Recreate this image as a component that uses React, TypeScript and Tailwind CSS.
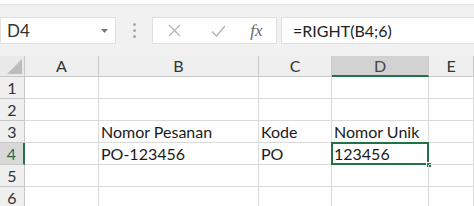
import React from "react";

const cols = ["A", "B", "C", "D", "E"];
const rows: { n: number; cells: string[] }[] = [
  { n: 1, cells: ["", "", "", "", ""] },
  { n: 2, cells: ["", "", "", "", ""] },
  { n: 3, cells: ["", "Nomor Pesanan", "Kode", "Nomor Unik", ""] },
  { n: 4, cells: ["", "PO-123456", "PO", "123456", ""] },
  { n: 5, cells: ["", "", "", "", ""] },
  { n: 6, cells: ["", "", "", "", ""] },
];

export default function App() {
  return (
    <div
      className="w-[474px] h-[206px] overflow-hidden bg-white text-[#222]"
      style={{ fontFamily: "Lato, 'Open Sans', sans-serif" }}
    >
      <div className="h-[5px] bg-white border-b border-[#e4e4e4]" />
      <div className="h-[51px] bg-[#f1f1f1] flex items-center">
        <div className="w-[116px] h-[27px] bg-white border border-[#e0e0e0] flex items-center justify-between pl-[6px] pr-[7px]">
          <span className="text-[17px] leading-none text-[#333]">D4</span>
          <svg width="7" height="4" viewBox="0 0 7 4">
            <path d="M0 0 L7 0 L3.5 4 Z" fill="#777" />
          </svg>
        </div>
        <div className="w-[36px] flex flex-col items-center gap-[3px]">
          <div className="w-[3px] h-[3px] rounded-full bg-[#a8a8a8]" />
          <div className="w-[3px] h-[3px] rounded-full bg-[#a8a8a8]" />
          <div className="w-[3px] h-[3px] rounded-full bg-[#a8a8a8]" />
        </div>
        <div className="w-[125px] h-[27px] bg-white border border-[#e0e0e0] flex items-center">
          <div className="w-[40px] flex justify-center pl-[2px]">
            <svg width="13" height="13" viewBox="0 0 13 13">
              <path d="M1 1 L12 12 M12 1 L1 12" stroke="#b5b5b5" strokeWidth="1.3" fill="none" />
            </svg>
          </div>
          <div className="w-[44px] flex justify-center pl-[6px]">
            <svg width="15" height="12" viewBox="0 0 15 12">
              <path d="M1 6.5 L5.5 11 L14 1" stroke="#b5b5b5" strokeWidth="1.5" fill="none" />
            </svg>
          </div>
          <div className="flex-1 flex justify-center">
            <span
              className="text-[17px] italic text-[#666] leading-none"
              style={{ fontFamily: "'Liberation Serif', serif" }}
            >
              fx
            </span>
          </div>
        </div>
        <div className="ml-[4px] flex-1 h-[27px] bg-white border-y border-l border-[#e0e0e0] flex items-center pl-[11px]">
          <span className="text-[16px] leading-none text-[#222]">=RIGHT(B4;6)</span>
        </div>
      </div>
      <div className="grid grid-cols-[25px_74px_160px_73px_97px_1fr] grid-rows-[21px_22px_22px_22px_22px_22px_22px]">
        <div className="bg-[#e9e9e9] border-r border-b border-[#c8c8c8] flex items-end justify-end pr-[2px] pb-[2px]">
          <svg width="15" height="15" viewBox="0 0 15 15">
            <path d="M15 0 L15 15 L0 15 Z" fill="#bdbdbd" />
          </svg>
        </div>
        {cols.map((c) => (
          <div
            key={c}
            className={
              c === "D"
                ? "bg-[#d2d2d2] border-r border-[#c8c8c8] border-b-2 border-b-[#217346] flex items-center justify-center text-[16px] text-[#444]"
                : "bg-[#efefef] border-r border-b border-[#c8c8c8] flex items-center justify-center text-[16px] text-[#333]"
            }
          >
            {c}
          </div>
        ))}
        {rows.map((r) => (
          <React.Fragment key={r.n}>
            <div
              className={
                r.n === 4
                  ? "bg-[#d8d8d8] border-b border-[#c8c8c8] border-r-2 border-r-[#217346] flex items-center justify-center text-[16px] text-[#2e6b48]"
                  : "bg-[#efefef] border-r border-b border-[#c8c8c8] flex items-center justify-center text-[16px] text-[#333]"
              }
            >
              {r.n}
            </div>
            {r.cells.map((v, i) => {
              const selected = r.n === 4 && i === 3;
              return (
                <div
                  key={i}
                  className="relative border-r border-b border-[#dadada] flex items-end pl-[2px] pb-[1px] text-[16px] leading-[19px] text-[#1a1a1a] whitespace-nowrap"
                >
                  {v}
                  {selected && (
                    <>
                      <div className="absolute left-[-1px] top-[-1px] right-[-1px] bottom-[-1px] border-2 border-[#217346]" />
                      <div className="absolute right-[-4px] bottom-[-4px] w-[6px] h-[6px] bg-[#217346] border border-white" />
                    </>
                  )}
                </div>
              );
            })}
          </React.Fragment>
        ))}
      </div>
    </div>
  );
}
